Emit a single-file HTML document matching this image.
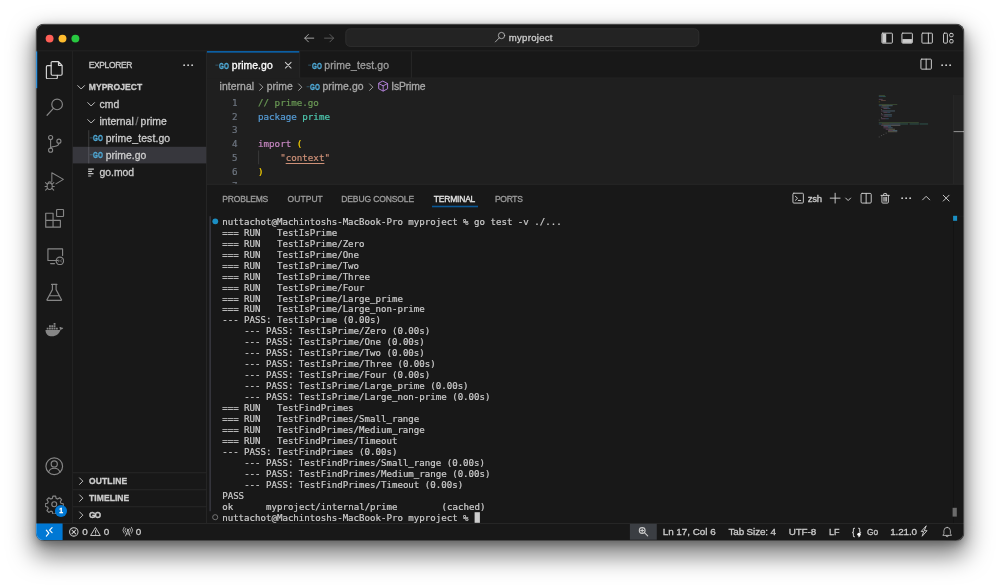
<!DOCTYPE html>
<html lang="en"><head><meta charset="utf-8"><title>prime.go — myproject</title>
<style>
html,body{margin:0;padding:0;background:#fff;}
body{width:1000px;height:588px;position:relative;overflow:hidden;font-family:"Liberation Sans", sans-serif;}
#win{position:absolute;left:36px;top:24px;width:928.3px;height:516.6px;border-radius:8px;background:#181818;overflow:hidden;}
#shadow{position:absolute;left:36px;top:24px;width:928.3px;height:516.6px;border-radius:8px;box-shadow:0 0 0 0.6px rgba(120,120,120,.5), 0 12px 24px 3px rgba(0,0,0,.5), 0 3px 9px rgba(0,0,0,.28);}
#rim{position:absolute;left:0;top:0;right:0;bottom:0;border-radius:8px;box-shadow:inset 0 0 0 0.8px rgba(255,255,255,.27);pointer-events:none;}
#page{will-change:transform;position:absolute;left:-36px;top:-24px;width:1000px;height:588px;}
#page div,#page span,#page svg{position:absolute;}
#page span{white-space:pre;}
.s{font-family:"Liberation Sans", sans-serif;-webkit-text-stroke:0.3px currentColor;}
.m{font-family:"DejaVu Sans Mono", "Liberation Mono", monospace;-webkit-text-stroke:0.2px currentColor;}
</style></head><body>
<div id="shadow"></div>
<div id="win"><div id="page">
<svg style="left:0;top:0;" width="1000" height="588" viewBox="0 0 1000 588"><rect x="36.00" y="24.00" width="928.00" height="27.00" fill="#181818"/><rect x="36.00" y="50.60" width="929.00" height="1.00" fill="#2b2b2b"/><rect x="36.00" y="51.40" width="36.20" height="472.00" fill="#181818"/><rect x="72.00" y="51.40" width="0.80" height="472.00" fill="#2b2b2b"/><rect x="72.80" y="51.40" width="133.40" height="472.00" fill="#181818"/><rect x="206.20" y="51.40" width="0.80" height="472.00" fill="#2b2b2b"/><rect x="207.00" y="51.40" width="757.00" height="26.40" fill="#181818"/><rect x="207.00" y="77.70" width="757.00" height="0.90" fill="#2b2b2b"/><rect x="207.00" y="51.40" width="92.40" height="27.20" fill="#1f1f1f"/><rect x="207.00" y="51.10" width="92.40" height="1.50" fill="#0a68b4"/><rect x="299.30" y="51.40" width="0.80" height="26.30" fill="#2b2b2b"/><rect x="410.90" y="51.40" width="0.80" height="26.30" fill="#2b2b2b"/><rect x="207.00" y="78.50" width="757.00" height="105.70" fill="#1f1f1f"/><rect x="45.65" y="34.65" width="7.90" height="7.90" fill="#ff5f57" rx="3.95"/><rect x="58.55" y="34.65" width="7.90" height="7.90" fill="#febc2e" rx="3.95"/><rect x="71.45" y="34.65" width="7.90" height="7.90" fill="#28c840" rx="3.95"/></svg>
<svg style="left:303.2px;top:31.6px;color:#cccccc;" width="12.3" height="12.3" viewBox="0 0 16 16" fill="none" stroke="currentColor" stroke-width="1" stroke-linecap="round" stroke-linejoin="round"><path d="M14 8H2.5M7 3.2L2.2 8L7 12.8"/></svg>
<svg style="left:323.2px;top:31.6px;color:#6f6f6f;" width="12.3" height="12.3" viewBox="0 0 16 16" fill="none" stroke="currentColor" stroke-width="1" stroke-linecap="round" stroke-linejoin="round"><path d="M2 8H13.5M9 3.2L13.8 8L9 12.8"/></svg>
<svg style="left:0;top:0;" width="1000" height="588" viewBox="0 0 1000 588"><rect x="345.80" y="28.80" width="353.00" height="17.60" fill="#232323" rx="4.40" stroke="#323232" stroke-width="0.8"/></svg>
<svg style="left:493.6px;top:31.4px;color:#cccccc;" width="12.3" height="12.3" viewBox="0 0 16 16" fill="none" stroke="currentColor" stroke-width="1" stroke-linecap="round" stroke-linejoin="round"><circle cx="9.800" cy="5.900" r="4.100"/><path d="M6.800 9L1.800 14.200"/></svg>
<span class="s" style="left:508.80px;top:31px;font-size:9.6px;line-height:13px;color:#cccccc;letter-spacing:0.260px;">myproject</span>
<svg style="left:881.2px;top:31.5px;color:#cccccc;stroke-width:1.3;" width="12.3" height="12.3" viewBox="0 0 16 16" fill="none" stroke="currentColor" stroke-width="1" stroke-linecap="round" stroke-linejoin="round"><rect x="1.2" y="1.5" width="13.6" height="13" rx="1.1"/><rect x="1.8" y="2" width="5" height="12" fill="currentColor" stroke="none"/></svg>
<svg style="left:901.2px;top:31.5px;color:#cccccc;stroke-width:1.3;" width="12.3" height="12.3" viewBox="0 0 16 16" fill="none" stroke="currentColor" stroke-width="1" stroke-linecap="round" stroke-linejoin="round"><rect x="1.2" y="1.5" width="13.6" height="13" rx="1.1"/><rect x="1.8" y="9.2" width="12.4" height="5" fill="currentColor" stroke="none"/></svg>
<svg style="left:921.2px;top:31.5px;color:#cccccc;stroke-width:1.3;" width="12.3" height="12.3" viewBox="0 0 16 16" fill="none" stroke="currentColor" stroke-width="1" stroke-linecap="round" stroke-linejoin="round"><rect x="1.2" y="1.5" width="13.6" height="13" rx="1.1"/><path d="M9.6 1.5V14.5"/></svg>
<svg style="left:941.8px;top:31.5px;color:#cccccc;stroke-width:1.3;" width="12.3" height="12.3" viewBox="0 0 16 16" fill="none" stroke="currentColor" stroke-width="1" stroke-linecap="round" stroke-linejoin="round"><rect x="2" y="1.5" width="5" height="13" rx="1.4"/><rect x="10" y="1.8" width="4.4" height="4.4" rx="1.4"/><rect x="10" y="9.8" width="4.4" height="4.4" rx="1.4"/></svg>
<svg style="left:0;top:0;" width="1000" height="588" viewBox="0 0 1000 588"><rect x="36.00" y="51.40" width="1.30" height="36.80" fill="#0078d4"/></svg>
<svg style="left:45.35px;top:60.55px;color:#d7d7d7;stroke-width:1.5;" width="18.5" height="18.5" viewBox="0 0 24 24" fill="none" stroke="currentColor" stroke-width="1" stroke-linecap="round" stroke-linejoin="round"><path d="M17.5 0.8H9.5a1.5 1.5 0 0 0-1.5 1.5V6M17.5 0.8L22.2 5.6V17a1.5 1.5 0 0 1-1.5 1.5H16M17.5 0.8V5.6H22.2"/><path d="M8 6H3.3a1.5 1.5 0 0 0-1.5 1.5V21.5A1.5 1.5 0 0 0 3.3 23H14.5A1.5 1.5 0 0 0 16 21.5V18.5H9.5A1.5 1.5 0 0 1 8 17Z"/></svg>
<svg style="left:45.95px;top:97.55px;color:#868686;stroke-width:1.5;" width="18.5" height="18.5" viewBox="0 0 24 24" fill="none" stroke="currentColor" stroke-width="1" stroke-linecap="round" stroke-linejoin="round"><circle cx="14.4" cy="8.3" r="6.9"/><path d="M9.6 13.500L1.400 22.400"/></svg>
<svg style="left:32px;top:120px;color:#868686;stroke-width:8;" width="50" height="80" viewBox="0 0 368 588.8" fill="none" stroke="currentColor" stroke-linecap="round" stroke-linejoin="round"><circle cx="137" cy="129" r="15"/><circle cx="137" cy="222" r="15"/><circle cx="198" cy="156" r="15"/><path d="M137 144V207M198 171c0 20-18 22-34 24s-27 4-27 12"/></svg>
<svg style="left:32px;top:120px;color:#868686;stroke-width:7.5;" width="50" height="80" viewBox="0 0 368 588.8" fill="none" stroke="currentColor" stroke-linecap="round" stroke-linejoin="round"><path d="M146 452V388L231 437L176 470"/><ellipse cx="130" cy="487" rx="19" ry="24"/><path d="M112 472L99 461M148 472L161 461M110 489H96M150 489H164M113 504L100 516M147 504L160 516M118 466a12 12 0 0 1 24 0"/></svg>
<svg style="left:32px;top:195px;color:#868686;stroke-width:8.5;" width="50" height="80" viewBox="0 0 368 588.8" fill="none" stroke="currentColor" stroke-linecap="round" stroke-linejoin="round"><path d="M101 134H155V187H209V237H101ZM155 187V237M101 187H155"/><rect x="181" y="107" width="51" height="51" rx="5"/></svg>
<svg style="left:45.65px;top:246.95px;color:#868686;stroke-width:1.5;" width="18.5" height="18.5" viewBox="0 0 24 24" fill="none" stroke="currentColor" stroke-width="1" stroke-linecap="round" stroke-linejoin="round"><path d="M15.5 17.5H2.5V2.5H21.5V11"/><path d="M6 21.5H11"/><circle cx="18" cy="18" r="4.8"/><path d="M15.8 16.4L17.2 18L15.8 19.6M20.2 16.4L18.8 18L20.2 19.6" stroke-width="0.9"/></svg>
<svg style="left:45.35px;top:282.85px;color:#868686;stroke-width:1.5;" width="18.5" height="18.5" viewBox="0 0 24 24" fill="none" stroke="currentColor" stroke-width="1" stroke-linecap="round" stroke-linejoin="round"><path d="M8.5 1.8H15.5M9.6 1.8V8.6L2.6 21.6a.6.6 0 0 0 .6.9H20.8a.6.6 0 0 0 .6-.9L14.4 8.6V1.8M5.4 16.6H18.6"/></svg>
<svg style="left:45.15px;top:320.95px;color:#868686;stroke-width:0;" width="18.5" height="18.5" viewBox="0 0 24 24" fill="none" stroke="currentColor" stroke-width="1" stroke-linecap="round" stroke-linejoin="round"><path fill="currentColor" stroke="none" d="M0.6 11.6H19.2c.3-1 .2-2.2-.5-3.2 .9-.9 2.4-.6 3.1.4 .9-.2 1.6 0 1.9.3-.8 1.6-2.3 2-3.4 2-1.6 5.4-5.6 8.8-11.3 8.8C3.8 19.9 0.9 16.8 0.6 11.6Z"/><path fill="currentColor" stroke="none" d="M2.2 8.6h2.4v2.4H2.2zM5.2 8.6h2.4v2.4H5.2zM8.2 8.6h2.4v2.4H8.2zM11.2 8.6h2.4v2.4h-2.4zM14.2 8.6h2.4v2.4h-2.4zM5.2 5.6h2.4v2.4H5.2zM8.2 5.6h2.4v2.4H8.2zM11.2 5.6h2.4v2.4h-2.4zM11.2 2.6h2.4v2.4h-2.4z"/></svg>
<svg style="left:45.05px;top:457.45px;color:#868686;stroke-width:1.5;" width="18.5" height="18.5" viewBox="0 0 24 24" fill="none" stroke="currentColor" stroke-width="1" stroke-linecap="round" stroke-linejoin="round"><circle cx="12" cy="12" r="10.8"/><circle cx="12" cy="9" r="4"/><path d="M4.6 19.6c1.2-3.6 4-5 7.4-5s6.200 1.400 7.400 5"/></svg>
<svg style="left:45.05px;top:495.15px;color:#868686;stroke-width:1.5;" width="18.5" height="18.5" viewBox="0 0 24 24" fill="none" stroke="currentColor" stroke-width="1" stroke-linecap="round" stroke-linejoin="round"><circle cx="12" cy="12" r="3.2"/><path d="M10.2 1.4h3.6l.6 3 2 .9 2.600-1.700 2.500 2.500-1.700 2.600 .9 2 3 .6v3.600l-3 .6-.9 2 1.700 2.600-2.500 2.500-2.600-1.700-2 .9-.6 3h-3.600l-.6-3-2-.9-2.600 1.700-2.500-2.500 1.700-2.600-.9-2-3-.6v-3.600l3-.6 .9-2-1.700-2.600 2.500-2.500 2.600 1.700 2-.9z"/></svg>
<svg style="left:0;top:0;" width="1000" height="588" viewBox="0 0 1000 588"><rect x="55.00" y="505.00" width="12.00" height="12.00" fill="#0078d4" rx="6.00"/></svg>
<span class="s" style="left:59.20px;top:506px;font-size:6.9px;line-height:9px;color:#fff;font-weight:700;">1</span>
<span class="s" style="left:88.75px;top:59px;font-size:8.5px;line-height:12px;color:#cccccc;letter-spacing:-0.379px;">EXPLORER</span>
<svg style="left:182.3px;top:58.8px;color:#cccccc;" width="12.3" height="12.3" viewBox="0 0 16 16" fill="none" stroke="currentColor" stroke-width="1" stroke-linecap="round" stroke-linejoin="round"><circle cx="2.8" cy="8" r="1.25" fill="currentColor" stroke="none"/><circle cx="8" cy="8" r="1.25" fill="currentColor" stroke="none"/><circle cx="13.2" cy="8" r="1.25" fill="currentColor" stroke="none"/></svg>
<svg style="left:75.0px;top:80.8px;color:#cccccc;stroke-width:1.2;" width="12.3" height="12.3" viewBox="0 0 16 16" fill="none" stroke="currentColor" stroke-width="1" stroke-linecap="round" stroke-linejoin="round"><path d="M3.6 6L8 10.400L12.400 6"/></svg>
<span class="s" style="left:88.75px;top:81px;font-size:8.5px;line-height:12px;color:#cccccc;font-weight:700;letter-spacing:0.068px;">MYPROJECT</span>
<svg style="left:84.7px;top:98.2px;color:#cccccc;stroke-width:1.2;" width="12.3" height="12.3" viewBox="0 0 16 16" fill="none" stroke="currentColor" stroke-width="1" stroke-linecap="round" stroke-linejoin="round"><path d="M3.6 6L8 10.400L12.400 6"/></svg>
<span class="s" style="left:99.50px;top:98px;font-size:10.4px;line-height:13px;color:#cccccc;letter-spacing:0.075px;">cmd</span>
<svg style="left:84.7px;top:115.3px;color:#cccccc;stroke-width:1.2;" width="12.3" height="12.3" viewBox="0 0 16 16" fill="none" stroke="currentColor" stroke-width="1" stroke-linecap="round" stroke-linejoin="round"><path d="M3.6 6L8 10.400L12.400 6"/></svg>
<span class="s" style="left:99.50px;top:115px;font-size:10.4px;line-height:13px;color:#cccccc;letter-spacing:0.018px;">internal</span>
<span class="s" style="left:135.50px;top:115px;font-size:10.4px;line-height:13px;color:#777777;">/</span>
<span class="s" style="left:140.60px;top:115px;font-size:10.4px;line-height:13px;color:#cccccc;letter-spacing:0.024px;">prime</span>
<svg style="left:0;top:0;" width="1000" height="588" viewBox="0 0 1000 588"><rect x="88.40" y="130.20" width="0.80" height="16.60" fill="#484848"/><rect x="89.80" y="137.50" width="3.00" height="0.80" fill="#4fa9d6" opacity=".5"/></svg>
<span class="s" style="left:93.20px;top:133px;font-size:8.2px;line-height:11px;color:#4fa9d6;font-weight:700;transform-origin:0 50%;transform:translateY(0.30px) scaleX(0.770);">GO</span>
<span class="s" style="left:105.70px;top:132px;font-size:10.4px;line-height:13px;color:#cccccc;letter-spacing:0.119px;">prime_test.go</span>
<svg style="left:0;top:0;" width="1000" height="588" viewBox="0 0 1000 588"><rect x="72.80" y="146.80" width="133.40" height="16.60" fill="#37373d"/><rect x="88.40" y="146.80" width="0.80" height="16.60" fill="#5c5c62"/><rect x="89.80" y="154.40" width="3.00" height="0.80" fill="#4fa9d6" opacity=".5"/></svg>
<span class="s" style="left:93.20px;top:150px;font-size:8.2px;line-height:11px;color:#4fa9d6;font-weight:700;transform-origin:0 50%;transform:translateY(0.20px) scaleX(0.770);">GO</span>
<span class="s" style="left:105.70px;top:149px;font-size:10.4px;line-height:13px;color:#cccccc;letter-spacing:0.022px;">prime.go</span>
<svg style="left:87.2px;top:166.4px;color:#c5c5c5;" width="9.2" height="12.3" viewBox="0 0 12 16" fill="none" stroke="currentColor" stroke-width="1" stroke-linecap="round" stroke-linejoin="round"><path d="M1.5 4H9M1.5 7H6.500M1.5 10H8.500M1.5 13H5.500" stroke-width="1.5" stroke-linecap="butt"/></svg>
<span class="s" style="left:99.50px;top:166px;font-size:10.4px;line-height:13px;color:#cccccc;letter-spacing:-0.016px;">go.mod</span>
<svg style="left:0;top:0;" width="1000" height="588" viewBox="0 0 1000 588"><rect x="72.80" y="472.40" width="133.40" height="0.80" fill="#2b2b2b"/></svg>
<svg style="left:75.2px;top:475.29999999999995px;color:#cccccc;stroke-width:1.2;" width="12.3" height="12.3" viewBox="0 0 16 16" fill="none" stroke="currentColor" stroke-width="1" stroke-linecap="round" stroke-linejoin="round"><path d="M6 3.800L10.200 8L6 12.200"/></svg>
<span class="s" style="left:89.00px;top:475px;font-size:8.5px;line-height:12px;color:#cccccc;font-weight:700;letter-spacing:0.128px;">OUTLINE</span>
<svg style="left:0;top:0;" width="1000" height="588" viewBox="0 0 1000 588"><rect x="72.80" y="489.40" width="133.40" height="0.80" fill="#2b2b2b"/></svg>
<svg style="left:75.2px;top:492.29999999999995px;color:#cccccc;stroke-width:1.2;" width="12.3" height="12.3" viewBox="0 0 16 16" fill="none" stroke="currentColor" stroke-width="1" stroke-linecap="round" stroke-linejoin="round"><path d="M6 3.800L10.200 8L6 12.200"/></svg>
<span class="s" style="left:89.00px;top:492px;font-size:8.5px;line-height:12px;color:#cccccc;font-weight:700;letter-spacing:0.086px;">TIMELINE</span>
<svg style="left:0;top:0;" width="1000" height="588" viewBox="0 0 1000 588"><rect x="72.80" y="506.40" width="133.40" height="0.80" fill="#2b2b2b"/></svg>
<svg style="left:75.2px;top:509.29999999999995px;color:#cccccc;stroke-width:1.2;" width="12.3" height="12.3" viewBox="0 0 16 16" fill="none" stroke="currentColor" stroke-width="1" stroke-linecap="round" stroke-linejoin="round"><path d="M6 3.800L10.200 8L6 12.200"/></svg>
<span class="s" style="left:89.00px;top:509px;font-size:8.5px;line-height:12px;color:#cccccc;font-weight:700;letter-spacing:-1.012px;">GO</span>
<svg style="left:0;top:0;" width="1000" height="588" viewBox="0 0 1000 588"><rect x="215.40" y="64.70" width="3.00" height="0.80" fill="#4fa9d6" opacity=".5"/></svg>
<span class="s" style="left:218.80px;top:61px;font-size:8.2px;line-height:11px;color:#4fa9d6;font-weight:700;transform-origin:0 50%;transform:translateY(-0.50px) scaleX(0.770);">GO</span>
<span class="s" style="left:231.80px;top:59px;font-size:10.4px;line-height:13px;color:#ffffff;letter-spacing:0.065px;">prime.go</span>
<svg style="left:282.2px;top:59.1px;color:#cccccc;stroke-width:1.35;" width="12.3" height="12.3" viewBox="0 0 16 16" fill="none" stroke="currentColor" stroke-width="1" stroke-linecap="round" stroke-linejoin="round"><path d="M4.400 4.400L11.800 11.800M11.800 4.400L4.400 11.800"/></svg>
<svg style="left:0;top:0;" width="1000" height="588" viewBox="0 0 1000 588"><rect x="308.20" y="64.70" width="3.00" height="0.80" fill="#4fa9d6" opacity=".5"/></svg>
<span class="s" style="left:311.60px;top:61px;font-size:8.2px;line-height:11px;color:#4fa9d6;font-weight:700;transform-origin:0 50%;transform:translateY(-0.50px) scaleX(0.770);">GO</span>
<span class="s" style="left:324.25px;top:59px;font-size:10.4px;line-height:13px;color:#9d9d9d;letter-spacing:0.152px;">prime_test.go</span>
<svg style="left:920.4px;top:58.4px;color:#cccccc;stroke-width:1.3;" width="12.3" height="12.3" viewBox="0 0 16 16" fill="none" stroke="currentColor" stroke-width="1" stroke-linecap="round" stroke-linejoin="round"><rect x="1.2" y="1.5" width="13.6" height="13" rx="1.1"/><path d="M8 1.5V14.5"/></svg>
<svg style="left:940.2px;top:58.6px;color:#cccccc;" width="12.3" height="12.3" viewBox="0 0 16 16" fill="none" stroke="currentColor" stroke-width="1" stroke-linecap="round" stroke-linejoin="round"><circle cx="2.8" cy="8" r="1.25" fill="currentColor" stroke="none"/><circle cx="8" cy="8" r="1.25" fill="currentColor" stroke="none"/><circle cx="13.2" cy="8" r="1.25" fill="currentColor" stroke="none"/></svg>
<span class="s" style="left:219.50px;top:80px;font-size:10.4px;line-height:13px;color:#a9a9a9;letter-spacing:0.076px;">internal</span>
<svg style="left:254.6px;top:80.8px;color:#a9a9a9;stroke-width:1.2;" width="12.3" height="12.3" viewBox="0 0 16 16" fill="none" stroke="currentColor" stroke-width="1" stroke-linecap="round" stroke-linejoin="round"><path d="M6 3.800L10.200 8L6 12.200"/></svg>
<span class="s" style="left:266.75px;top:80px;font-size:10.4px;line-height:13px;color:#a9a9a9;letter-spacing:0.012px;">prime</span>
<svg style="left:294.0px;top:80.8px;color:#a9a9a9;stroke-width:1.2;" width="12.3" height="12.3" viewBox="0 0 16 16" fill="none" stroke="currentColor" stroke-width="1" stroke-linecap="round" stroke-linejoin="round"><path d="M6 3.800L10.200 8L6 12.200"/></svg>
<svg style="left:0;top:0;" width="1000" height="588" viewBox="0 0 1000 588"><rect x="306.60" y="86.40" width="3.00" height="0.80" fill="#4fa9d6" opacity=".5"/></svg>
<span class="s" style="left:310.00px;top:82px;font-size:8.2px;line-height:11px;color:#4fa9d6;font-weight:700;transform-origin:0 50%;transform:translateY(0.20px) scaleX(0.770);">GO</span>
<span class="s" style="left:322.50px;top:80px;font-size:10.4px;line-height:13px;color:#a9a9a9;letter-spacing:0.086px;">prime.go</span>
<svg style="left:364.6px;top:80.8px;color:#a9a9a9;stroke-width:1.2;" width="12.3" height="12.3" viewBox="0 0 16 16" fill="none" stroke="currentColor" stroke-width="1" stroke-linecap="round" stroke-linejoin="round"><path d="M6 3.800L10.200 8L6 12.200"/></svg>
<svg style="left:376.6px;top:80.3px;color:#b180d7;" width="12.3" height="12.3" viewBox="0 0 16 16" fill="none" stroke="currentColor" stroke-width="1" stroke-linecap="round" stroke-linejoin="round"><path stroke-width="1.3" d="M8 1.6L13.800 4.600V11.4L8 14.4L2.200 11.4V4.600ZM2.400 4.700L8 7.600L13.600 4.700M8 7.600V14.2"/></svg>
<span class="s" style="left:391.25px;top:80px;font-size:10.4px;line-height:13px;color:#a9a9a9;letter-spacing:-0.156px;">IsPrime</span>
<span class="m" style="left:232.06px;top:96px;font-size:9.2px;line-height:13px;color:#6e7681;">1</span>
<span class="m" style="left:258.00px;top:96px;font-size:9.2px;line-height:13px;color:#6a9955;">// prime.go</span>
<span class="m" style="left:232.06px;top:110px;font-size:9.2px;line-height:13px;color:#6e7681;">2</span>
<span class="m" style="left:258.00px;top:110px;font-size:9.2px;line-height:13px;color:#569cd6;">package</span>
<span class="m" style="left:302.31px;top:110px;font-size:9.2px;line-height:13px;color:#4ec9b0;">prime</span>
<span class="m" style="left:232.06px;top:123px;font-size:9.2px;line-height:13px;color:#6e7681;">3</span>
<span class="m" style="left:232.06px;top:137px;font-size:9.2px;line-height:13px;color:#6e7681;">4</span>
<span class="m" style="left:258.00px;top:137px;font-size:9.2px;line-height:13px;color:#c586c0;">import</span>
<span class="m" style="left:296.77px;top:137px;font-size:9.2px;line-height:13px;color:#ffd700;">(</span>
<span class="m" style="left:232.06px;top:151px;font-size:9.2px;line-height:13px;color:#6e7681;">5</span>
<span class="m" style="left:280.16px;top:151px;font-size:9.2px;line-height:13px;color:#ce9178;">&quot;</span>
<span class="m" style="left:285.69px;top:151px;font-size:9.2px;line-height:13px;color:#ce9178;text-decoration:underline;text-underline-offset:2.4px;text-decoration-thickness:1.1px;">context</span>
<span class="m" style="left:324.47px;top:151px;font-size:9.2px;line-height:13px;color:#ce9178;">&quot;</span>
<span class="m" style="left:232.06px;top:165px;font-size:9.2px;line-height:13px;color:#6e7681;">6</span>
<span class="m" style="left:258.00px;top:165px;font-size:9.2px;line-height:13px;color:#ffd700;">)</span>
<span class="m" style="left:232.06px;top:179px;font-size:9.2px;line-height:13px;color:#6e7681;">7</span>
<svg style="left:0;top:0;" width="1000" height="588" viewBox="0 0 1000 588"><rect x="258.30" y="150.50" width="0.80" height="13.80" fill="#404040"/><rect x="878.80" y="95.00" width="6.16" height="0.75" fill="#6a9955" opacity=".42"/><rect x="878.80" y="96.30" width="3.85" height="0.75" fill="#569cd6" opacity=".42"/><rect x="882.65" y="96.30" width="3.08" height="0.75" fill="#4ec9b0" opacity=".42"/><rect x="878.80" y="98.90" width="3.85" height="0.75" fill="#c586c0" opacity=".42"/><rect x="881.11" y="100.20" width="4.62" height="0.75" fill="#ce9178" opacity=".42"/><rect x="878.80" y="101.50" width="0.77" height="0.75" fill="#ffd700" opacity=".42"/><rect x="878.80" y="104.10" width="10.78" height="0.75" fill="#6a9955" opacity=".42"/><rect x="889.58" y="104.10" width="7.70" height="0.75" fill="#6a9955" opacity=".42"/><rect x="878.80" y="105.40" width="3.08" height="0.75" fill="#569cd6" opacity=".42"/><rect x="881.88" y="105.40" width="4.62" height="0.75" fill="#dcdcaa" opacity=".42"/><rect x="886.50" y="105.40" width="6.16" height="0.75" fill="#9cdcfe" opacity=".42"/><rect x="881.11" y="106.70" width="1.54" height="0.75" fill="#c586c0" opacity=".42"/><rect x="882.65" y="106.70" width="6.16" height="0.75" fill="#9cdcfe" opacity=".42"/><rect x="883.42" y="108.00" width="3.85" height="0.75" fill="#c586c0" opacity=".42"/><rect x="887.27" y="108.00" width="3.08" height="0.75" fill="#569cd6" opacity=".42"/><rect x="881.11" y="109.30" width="0.77" height="0.75" fill="#d4d4d4" opacity=".42"/><rect x="881.11" y="110.60" width="1.54" height="0.75" fill="#c586c0" opacity=".42"/><rect x="882.65" y="110.60" width="12.32" height="0.75" fill="#9cdcfe" opacity=".42"/><rect x="883.42" y="111.90" width="3.85" height="0.75" fill="#c586c0" opacity=".42"/><rect x="887.27" y="111.90" width="3.08" height="0.75" fill="#569cd6" opacity=".42"/><rect x="881.11" y="113.20" width="0.77" height="0.75" fill="#d4d4d4" opacity=".42"/><rect x="881.11" y="114.50" width="2.31" height="0.75" fill="#c586c0" opacity=".42"/><rect x="884.19" y="114.50" width="7.70" height="0.75" fill="#9cdcfe" opacity=".42"/><rect x="883.42" y="115.80" width="4.62" height="0.75" fill="#c586c0" opacity=".42"/><rect x="888.04" y="115.80" width="3.85" height="0.75" fill="#569cd6" opacity=".42"/><rect x="881.11" y="117.10" width="0.77" height="0.75" fill="#d4d4d4" opacity=".42"/><rect x="881.11" y="118.40" width="4.62" height="0.75" fill="#c586c0" opacity=".42"/><rect x="885.73" y="118.40" width="3.08" height="0.75" fill="#569cd6" opacity=".42"/><rect x="878.80" y="119.70" width="0.77" height="0.75" fill="#d4d4d4" opacity=".42"/><rect x="878.80" y="122.30" width="23.10" height="0.75" fill="#6a9955" opacity=".42"/><rect x="901.90" y="122.30" width="16.94" height="0.75" fill="#6a9955" opacity=".42"/><rect x="878.80" y="123.60" width="3.08" height="0.75" fill="#569cd6" opacity=".42"/><rect x="881.88" y="123.60" width="7.70" height="0.75" fill="#dcdcaa" opacity=".42"/><rect x="889.58" y="123.60" width="10.78" height="0.75" fill="#9cdcfe" opacity=".42"/><rect x="900.36" y="123.60" width="7.70" height="0.75" fill="#4ec9b0" opacity=".42"/><rect x="909.60" y="123.60" width="9.24" height="0.75" fill="#4ec9b0" opacity=".42"/><rect x="919.61" y="123.60" width="8.47" height="0.75" fill="#4ec9b0" opacity=".42"/><rect x="881.11" y="124.90" width="2.31" height="0.75" fill="#c586c0" opacity=".42"/><rect x="883.42" y="124.90" width="7.70" height="0.75" fill="#9cdcfe" opacity=".42"/><rect x="891.12" y="124.90" width="9.24" height="0.75" fill="#d4d4d4" opacity=".42"/><rect x="883.42" y="126.20" width="4.62" height="0.75" fill="#c586c0" opacity=".42"/><rect x="888.04" y="126.20" width="3.08" height="0.75" fill="#569cd6" opacity=".42"/><rect x="883.42" y="127.50" width="4.62" height="0.75" fill="#c586c0" opacity=".42"/><rect x="888.04" y="127.50" width="4.62" height="0.75" fill="#9cdcfe" opacity=".42"/><rect x="885.73" y="128.80" width="3.08" height="0.75" fill="#c586c0" opacity=".42"/><rect x="888.81" y="128.80" width="6.16" height="0.75" fill="#dcdcaa" opacity=".42"/><rect x="888.04" y="130.10" width="4.62" height="0.75" fill="#c586c0" opacity=".42"/><rect x="892.66" y="130.10" width="4.62" height="0.75" fill="#9cdcfe" opacity=".42"/><rect x="888.04" y="131.40" width="6.16" height="0.75" fill="#dcdcaa" opacity=".42"/><rect x="894.20" y="131.40" width="3.08" height="0.75" fill="#d4d4d4" opacity=".42"/><rect x="885.73" y="132.70" width="0.77" height="0.75" fill="#d4d4d4" opacity=".42"/><rect x="883.42" y="134.00" width="0.77" height="0.75" fill="#d4d4d4" opacity=".42"/><rect x="881.11" y="135.30" width="0.77" height="0.75" fill="#d4d4d4" opacity=".42"/><rect x="878.80" y="136.60" width="0.77" height="0.75" fill="#d4d4d4" opacity=".42"/><rect x="953.40" y="94.80" width="10.60" height="89.20" fill="#222222"/><rect x="953.20" y="94.80" width="0.70" height="89.20" fill="#2a2a2a"/><rect x="953.60" y="131.20" width="10.40" height="0.90" fill="#a0a0a0"/><rect x="207.00" y="184.00" width="757.00" height="339.40" fill="#181818"/><rect x="207.00" y="183.80" width="757.00" height="0.80" fill="#2b2b2b"/></svg>
<span class="s" style="left:222.30px;top:193px;font-size:8.5px;line-height:12px;color:#9d9d9d;letter-spacing:-0.181px;">PROBLEMS</span>
<span class="s" style="left:287.60px;top:193px;font-size:8.5px;line-height:12px;color:#9d9d9d;letter-spacing:0.050px;">OUTPUT</span>
<span class="s" style="left:341.30px;top:193px;font-size:8.5px;line-height:12px;color:#9d9d9d;letter-spacing:-0.115px;">DEBUG CONSOLE</span>
<span class="s" style="left:433.80px;top:193px;font-size:8.5px;line-height:12px;color:#e7e7e7;letter-spacing:-0.207px;">TERMINAL</span>
<span class="s" style="left:495.00px;top:193px;font-size:8.5px;line-height:12px;color:#9d9d9d;letter-spacing:-0.315px;">PORTS</span>
<svg style="left:0;top:0;" width="1000" height="588" viewBox="0 0 1000 588"><rect x="432.00" y="205.70" width="46.00" height="1.60" fill="#0a5896"/></svg>
<svg style="left:791.9px;top:192.3px;color:#cccccc;stroke-width:1.25;" width="12.3" height="12.3" viewBox="0 0 16 16" fill="none" stroke="currentColor" stroke-width="1" stroke-linecap="round" stroke-linejoin="round"><rect x="1.200" y="1.600" width="13.600" height="12.800" rx="1.200"/><path d="M4.4 5.600L7.200 8.200L4.400 10.8M8.200 11H11.400"/></svg>
<span class="s" style="left:807.80px;top:192px;font-size:9.6px;line-height:13px;color:#cccccc;letter-spacing:-0.347px;">zsh</span>
<svg style="left:829.2px;top:192.3px;color:#cccccc;stroke-width:1.25;" width="12.3" height="12.3" viewBox="0 0 16 16" fill="none" stroke="currentColor" stroke-width="1" stroke-linecap="round" stroke-linejoin="round"><path d="M8 1.600V14.4M1.600 8H14.400"/></svg>
<svg style="left:842.0px;top:192.6px;color:#cccccc;stroke-width:1.25;" width="12.3" height="12.3" viewBox="0 0 16 16" fill="none" stroke="currentColor" stroke-width="1" stroke-linecap="round" stroke-linejoin="round"><path d="M4.8 6.600L8 9.800L11.200 6.600"/></svg>
<svg style="left:860.2px;top:192.2px;color:#cccccc;stroke-width:1.25;" width="12.3" height="12.3" viewBox="0 0 16 16" fill="none" stroke="currentColor" stroke-width="1" stroke-linecap="round" stroke-linejoin="round"><rect x="1.400" y="1.800" width="13.200" height="12.600" rx="1.400"/><path d="M8 1.800V14.400"/></svg>
<svg style="left:879.3px;top:192.2px;color:#cccccc;stroke-width:1.25;" width="12.3" height="12.3" viewBox="0 0 16 16" fill="none" stroke="currentColor" stroke-width="1" stroke-linecap="round" stroke-linejoin="round"><path d="M2.600 4.400H13.400M6 4.400V2.800A.8.8 0 0 1 6.800 2H9.200A.8.8 0 0 1 10 2.800V4.400M3.800 4.400V13.200A1.200 1.200 0 0 0 5 14.400H11A1.200 1.200 0 0 0 12.200 13.200V4.400M6.400 6.800V12M8 6.800V12M9.600 6.800V12"/></svg>
<svg style="left:900.0px;top:192.2px;color:#cccccc;stroke-width:1.25;" width="12.3" height="12.3" viewBox="0 0 16 16" fill="none" stroke="currentColor" stroke-width="1" stroke-linecap="round" stroke-linejoin="round"><circle cx="2.8" cy="8" r="1.25" fill="currentColor" stroke="none"/><circle cx="8" cy="8" r="1.25" fill="currentColor" stroke="none"/><circle cx="13.2" cy="8" r="1.25" fill="currentColor" stroke="none"/></svg>
<svg style="left:920.2px;top:192.0px;color:#cccccc;stroke-width:1.25;" width="12.3" height="12.3" viewBox="0 0 16 16" fill="none" stroke="currentColor" stroke-width="1" stroke-linecap="round" stroke-linejoin="round"><path d="M3.400 10.200L8 5.600L12.600 10.200"/></svg>
<svg style="left:940.2px;top:192.2px;color:#cccccc;stroke-width:1.25;" width="12.3" height="12.3" viewBox="0 0 16 16" fill="none" stroke="currentColor" stroke-width="1" stroke-linecap="round" stroke-linejoin="round"><path d="M4.2 4.200L11.800 11.800M11.800 4.200L4.200 11.800"/></svg>
<span class="m" style="left:222.20px;top:216px;font-size:9.11px;line-height:12px;color:#cccccc;">nuttachot@Machintoshs-MacBook-Pro myproject % go test -v ./...</span>
<span class="m" style="left:222.20px;top:227px;font-size:9.11px;line-height:12px;color:#cccccc;">=== RUN   TestIsPrime</span>
<span class="m" style="left:222.20px;top:238px;font-size:9.11px;line-height:12px;color:#cccccc;">=== RUN   TestIsPrime/Zero</span>
<span class="m" style="left:222.20px;top:249px;font-size:9.11px;line-height:12px;color:#cccccc;">=== RUN   TestIsPrime/One</span>
<span class="m" style="left:222.20px;top:260px;font-size:9.11px;line-height:12px;color:#cccccc;">=== RUN   TestIsPrime/Two</span>
<span class="m" style="left:222.20px;top:271px;font-size:9.11px;line-height:12px;color:#cccccc;">=== RUN   TestIsPrime/Three</span>
<span class="m" style="left:222.20px;top:282px;font-size:9.11px;line-height:12px;color:#cccccc;">=== RUN   TestIsPrime/Four</span>
<span class="m" style="left:222.20px;top:293px;font-size:9.11px;line-height:12px;color:#cccccc;">=== RUN   TestIsPrime/Large_prime</span>
<span class="m" style="left:222.20px;top:303px;font-size:9.11px;line-height:12px;color:#cccccc;">=== RUN   TestIsPrime/Large_non-prime</span>
<span class="m" style="left:222.20px;top:314px;font-size:9.11px;line-height:12px;color:#cccccc;">--- PASS: TestIsPrime (0.00s)</span>
<span class="m" style="left:244.14px;top:325px;font-size:9.11px;line-height:12px;color:#cccccc;">--- PASS: TestIsPrime/Zero (0.00s)</span>
<span class="m" style="left:244.14px;top:336px;font-size:9.11px;line-height:12px;color:#cccccc;">--- PASS: TestIsPrime/One (0.00s)</span>
<span class="m" style="left:244.14px;top:347px;font-size:9.11px;line-height:12px;color:#cccccc;">--- PASS: TestIsPrime/Two (0.00s)</span>
<span class="m" style="left:244.14px;top:358px;font-size:9.11px;line-height:12px;color:#cccccc;">--- PASS: TestIsPrime/Three (0.00s)</span>
<span class="m" style="left:244.14px;top:369px;font-size:9.11px;line-height:12px;color:#cccccc;">--- PASS: TestIsPrime/Four (0.00s)</span>
<span class="m" style="left:244.14px;top:380px;font-size:9.11px;line-height:12px;color:#cccccc;">--- PASS: TestIsPrime/Large_prime (0.00s)</span>
<span class="m" style="left:244.14px;top:391px;font-size:9.11px;line-height:12px;color:#cccccc;">--- PASS: TestIsPrime/Large_non-prime (0.00s)</span>
<span class="m" style="left:222.20px;top:402px;font-size:9.11px;line-height:12px;color:#cccccc;">=== RUN   TestFindPrimes</span>
<span class="m" style="left:222.20px;top:413px;font-size:9.11px;line-height:12px;color:#cccccc;">=== RUN   TestFindPrimes/Small_range</span>
<span class="m" style="left:222.20px;top:424px;font-size:9.11px;line-height:12px;color:#cccccc;">=== RUN   TestFindPrimes/Medium_range</span>
<span class="m" style="left:222.20px;top:435px;font-size:9.11px;line-height:12px;color:#cccccc;">=== RUN   TestFindPrimes/Timeout</span>
<span class="m" style="left:222.20px;top:446px;font-size:9.11px;line-height:12px;color:#cccccc;">--- PASS: TestFindPrimes (0.00s)</span>
<span class="m" style="left:244.14px;top:457px;font-size:9.11px;line-height:12px;color:#cccccc;">--- PASS: TestFindPrimes/Small_range (0.00s)</span>
<span class="m" style="left:244.14px;top:468px;font-size:9.11px;line-height:12px;color:#cccccc;">--- PASS: TestFindPrimes/Medium_range (0.00s)</span>
<span class="m" style="left:244.14px;top:479px;font-size:9.11px;line-height:12px;color:#cccccc;">--- PASS: TestFindPrimes/Timeout (0.00s)</span>
<span class="m" style="left:222.20px;top:490px;font-size:9.11px;line-height:12px;color:#cccccc;">PASS</span>
<span class="m" style="left:222.20px;top:501px;font-size:9.11px;line-height:12px;color:#cccccc;">ok</span>
<span class="m" style="left:266.08px;top:501px;font-size:9.11px;line-height:12px;color:#cccccc;">myproject/internal/prime</span>
<span class="m" style="left:441.59px;top:501px;font-size:9.11px;line-height:12px;color:#cccccc;">(cached)</span>
<span class="m" style="left:222.20px;top:512px;font-size:9.11px;line-height:12px;color:#cccccc;">nuttachot@Machintoshs-MacBook-Pro myproject %</span>
<svg style="left:0;top:0;" width="1000" height="588" viewBox="0 0 1000 588"><rect x="474.60" y="512.20" width="5.30" height="10.60" fill="#cdcdcd"/><rect x="209.40" y="216.20" width="1.50" height="295.00" fill="#383840"/><rect x="212.40" y="218.40" width="5.80" height="5.80" fill="#1b8fc4" rx="2.90"/><rect x="212.65" y="514.65" width="5.10" height="5.10" fill="none" rx="2.55" stroke="#7a7a7a" stroke-width="0.9"/><rect x="953.00" y="216.00" width="0.90" height="307.40" fill="#131313"/><rect x="953.30" y="215.80" width="10.70" height="0.70" fill="#1f1f1f"/><rect x="953.10" y="215.80" width="4.00" height="5.00" fill="#1b8fc4"/><rect x="952.60" y="507.80" width="4.20" height="8.80" fill="#6b6b6b"/><rect x="36.00" y="523.40" width="928.00" height="16.60" fill="#181818"/><rect x="36.00" y="523.00" width="928.00" height="0.80" fill="#2b2b2b"/><rect x="36.00" y="523.50" width="26.60" height="16.60" fill="#0078d4"/></svg>
<svg style="left:36px;top:518px;color:#ffffff;stroke-width:9.5;" width="120" height="24" viewBox="0 0 1000 200" fill="none" stroke="currentColor" stroke-linecap="round" stroke-linejoin="round"><path d="M86 101L107 126L86 151M134 80L113 101L134 122"/></svg>
<svg style="left:36px;top:518px;color:#cccccc;stroke-width:8.5;" width="120" height="24" viewBox="0 0 1000 200" fill="none" stroke="currentColor" stroke-linecap="round" stroke-linejoin="round"><circle cx="315" cy="116" r="35"/><path d="M299 100L331 132M331 100L299 132"/></svg>
<span class="s" style="left:82.26px;top:525px;font-size:9.9px;line-height:13px;color:#cccccc;">0</span>
<svg style="left:36px;top:518px;color:#cccccc;stroke-width:8;" width="120" height="24" viewBox="0 0 1000 200" fill="none" stroke="currentColor" stroke-linecap="round" stroke-linejoin="round"><path d="M497 82L536 146H458ZM497 104V124M497 134V136"/></svg>
<span class="s" style="left:103.80px;top:525px;font-size:9.9px;line-height:13px;color:#cccccc;">0</span>
<svg style="left:36px;top:518px;color:#cccccc;stroke-width:6.5;" width="120" height="24" viewBox="0 0 1000 200" fill="none" stroke="currentColor" stroke-linecap="round" stroke-linejoin="round"><path d="M765 104L746 149M765 104L784 149M753 133H777M748 118A22 22 0 0 1 748 86M782 118A22 22 0 0 0 782 86M734 127A38 38 0 0 1 734 77M796 127A38 38 0 0 0 796 77"/><circle cx="765" cy="99" r="5" fill="currentColor"/></svg>
<span class="s" style="left:135.84px;top:525px;font-size:9.9px;line-height:13px;color:#cccccc;">0</span>
<svg style="left:0;top:0;" width="1000" height="588" viewBox="0 0 1000 588"><rect x="629.90" y="523.80" width="26.90" height="15.90" fill="#3b3e43"/></svg>
<svg style="left:625px;top:520px;color:#cccccc;stroke-width:11;" width="100" height="22" viewBox="0 0 1000 220" fill="none" stroke="currentColor" stroke-linecap="round" stroke-linejoin="round"><circle cx="172" cy="105" r="29"/><path d="M194 127L227 158M172 90V120M157 105H187"/></svg>
<span class="s" style="left:662.70px;top:525px;font-size:9.9px;line-height:13px;color:#cccccc;letter-spacing:-0.019px;">Ln 17, Col 6</span>
<span class="s" style="left:728.50px;top:525px;font-size:9.9px;line-height:13px;color:#cccccc;letter-spacing:-0.136px;">Tab Size: 4</span>
<span class="s" style="left:788.70px;top:525px;font-size:9.9px;line-height:13px;color:#cccccc;letter-spacing:-0.121px;">UTF-8</span>
<span class="s" style="left:829.30px;top:525px;font-size:9.9px;line-height:13px;color:#cccccc;transform-origin:0 50%;transform:translateY(0.00px) scaleX(0.914);">LF</span>
<span class="s" style="left:851.90px;top:526px;font-size:8.6px;line-height:12px;color:#cccccc;letter-spacing:0.571px;">{ }</span>
<svg style="left:0;top:0;" width="1000" height="588" viewBox="0 0 1000 588"><rect x="857.30" y="532.70" width="3.30" height="3.30" fill="#ffffff" rx="1.65"/></svg>
<span class="s" style="left:866.75px;top:525px;font-size:9.9px;line-height:13px;color:#cccccc;transform-origin:0 50%;transform:translateY(0.00px) scaleX(0.844);">Go</span>
<span class="s" style="left:890.20px;top:525px;font-size:9.9px;line-height:13px;color:#cccccc;letter-spacing:-0.133px;">1.21.0</span>
<svg style="left:918.0px;top:525.3px;color:#cccccc;stroke-width:1.25;" width="12.3" height="12.3" viewBox="0 0 16 16" fill="none" stroke="currentColor" stroke-width="1" stroke-linecap="round" stroke-linejoin="round"><path d="M10.400 1.400L4.200 8.400H7.400L5.400 14.600L11.800 7.400H8.600Z"/></svg>
<svg style="left:940.6px;top:525.6px;color:#cccccc;" width="12.3" height="12.3" viewBox="0 0 16 16" fill="none" stroke="currentColor" stroke-width="1" stroke-linecap="round" stroke-linejoin="round"><path d="M8 1.800A4.200 4.200 0 0 0 3.800 6V9.800L2.400 12.200H13.600L12.200 9.800V6A4.200 4.200 0 0 0 8 1.800ZM6.400 12.400A1.600 1.600 0 0 0 9.600 12.400"/></svg>
</div><div id="rim"></div></div>
</body></html>
